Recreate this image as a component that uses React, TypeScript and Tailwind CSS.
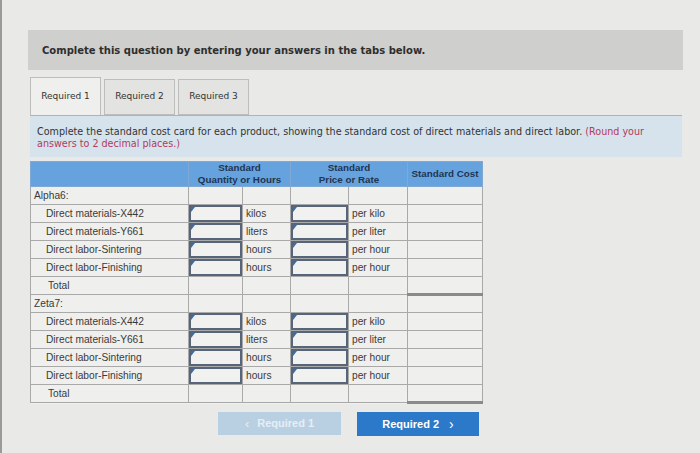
import React from "react";

const rowsA = [
  { label: "Direct materials-X442", u1: "kilos", u2: "per kilo" },
  { label: "Direct materials-Y661", u1: "liters", u2: "per liter" },
  { label: "Direct labor-Sintering", u1: "hours", u2: "per hour" },
  { label: "Direct labor-Finishing", u1: "hours", u2: "per hour" },
];

const cell = "border border-[#a9a9a9] p-0";

function InputCell() {
  return (
    <td className={cell}>
      <div className="relative h-[17px] border-2 border-[#56657a] bg-[#f1f1ef]">
        <div className="absolute left-0 top-0 w-0 h-0 border-t-[5px] border-t-[#2d6fb8] border-r-[4px] border-r-transparent" />
      </div>
    </td>
  );
}

function Group({ name }: { name: string }) {
  return (
    <>
      <tr className="h-[18px]">
        <td className={cell + " pl-[3px]"}>{name}</td>
        <td className={cell} />
        <td className={cell} />
        <td className={cell} />
        <td className={cell} />
        <td className={cell} />
      </tr>
      {rowsA.map((r) => (
        <tr key={r.label} className="h-[18px]">
          <td className={cell + " pl-[15px]"}>{r.label}</td>
          <InputCell />
          <td className={cell + " pl-[3px]"}>{r.u1}</td>
          <InputCell />
          <td className={cell + " pl-[3px]"}>{r.u2}</td>
          <td className={cell} />
        </tr>
      ))}
      <tr className="h-[18px]">
        <td className={cell + " pl-[17px]"}>Total</td>
        <td className={cell} />
        <td className={cell} />
        <td className={cell} />
        <td className={cell} />
        <td className={cell + " border-b-[3px] border-b-[#8a8a8a]"} />
      </tr>
    </>
  );
}

export default function App() {
  return (
    <div className="w-[700px] h-[453px] bg-[#e9e9e7] border-l-2 border-l-[#9a9a9a] overflow-hidden">
      <div className="pt-[30px] pl-[26px] pr-[17px]">
        <div className="h-[40px] bg-[#cfcfcd] flex items-center pl-[14px] text-[10px] font-bold text-[#2e2e2e] [font-family:'DejaVu_Sans',sans-serif]">
          Complete this question by entering your answers in the tabs below.
        </div>
      </div>
      <div className="pl-[28px] pr-[18px]">
        <div className="flex items-end gap-[3px] mt-[7px] h-[38px] [font-family:'DejaVu_Sans',sans-serif] text-[9px] text-[#333]">
          <div className="w-[71px] h-[38px] bg-[#efefed] border border-[#bdbdbb] border-b-0 flex items-center justify-center">Required 1</div>
          <div className="w-[71px] h-[36px] bg-[#e3e3e1] border border-[#bdbdbb] flex items-center justify-center">Required 2</div>
          <div className="w-[71px] h-[36px] bg-[#e3e3e1] border border-[#bdbdbb] flex items-center justify-center">Required 3</div>
        </div>
        <div className="h-[42px] bg-[#d6e3ec] border-t border-[#a9b4bc] pl-[7px] pt-[10px] text-[9.6px] leading-[12px] text-[#333] [font-family:'DejaVu_Sans',sans-serif]">
          Complete the standard cost card for each product, showing the standard cost of direct materials and direct labor.{" "}
          <span className="text-[#b33a5c]">(Round your answers to 2 decimal places.)</span>
        </div>
        <table className="mt-[4px] border-collapse table-fixed w-[452px] text-[10.2px] text-[#3a3a3a] [font-family:'Liberation_Sans',Arial,sans-serif] bg-[#efefed]">
          <colgroup>
            <col className="w-[158px]" />
            <col className="w-[54px]" />
            <col className="w-[48px]" />
            <col className="w-[58px]" />
            <col className="w-[59px]" />
            <col className="w-[75px]" />
          </colgroup>
          <thead>
            <tr className="bg-[#66a3de] text-[#1f3552] font-bold h-[25px] leading-[12px] text-[9.8px]">
              <th className="border border-[#7fa9d2] p-0" />
              <th colSpan={2} className="border border-[#7fa9d2] text-center p-0">Standard<br />Quantity or Hours</th>
              <th colSpan={2} className="border border-[#7fa9d2] text-center p-0">Standard<br />Price or Rate</th>
              <th className="border border-[#7fa9d2] text-center p-0">Standard Cost</th>
            </tr>
          </thead>
          <tbody>
            <Group name="Alpha6:" />
            <Group name="Zeta7:" />
          </tbody>
        </table>
        <div className="flex gap-[16px] ml-[188px] mt-[8px] [font-family:'Liberation_Sans',Arial,sans-serif] text-[11px] font-bold">
          <div className="w-[123px] h-[23px] bg-[#b9d0e2] text-[#e6eef5] flex items-center justify-center gap-[8px]">
            <span className="text-[13px] font-normal">‹</span>
            <span>Required 1</span>
          </div>
          <div className="w-[122px] h-[24px] bg-[#2c79c9] text-white flex items-center justify-center gap-[10px]">
            <span>Required 2</span>
            <span className="text-[14px] font-normal">›</span>
          </div>
        </div>
      </div>
    </div>
  );
}
